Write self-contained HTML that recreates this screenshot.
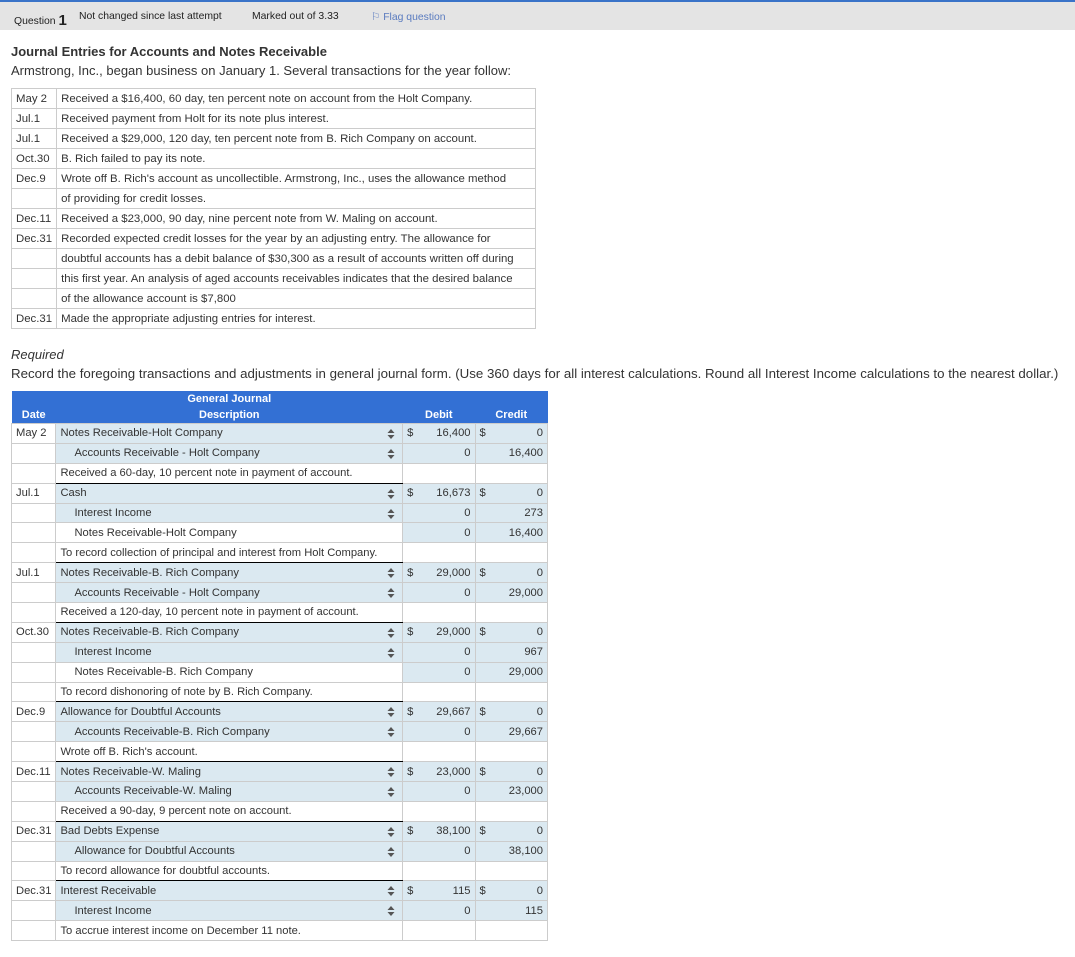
<!DOCTYPE html>
<html><head><meta charset="utf-8"><style>
body{margin:0;width:1075px;height:957px;background:#fff;font-family:"Liberation Sans",sans-serif;color:#333;position:relative;overflow:hidden}
.top{position:absolute;left:0;top:0;width:1075px;height:30px;background:#e4e4e4;border-top:2px solid #3a73c8;box-sizing:border-box;font-size:10.4px;color:#222}
.top span{position:absolute;top:9px}
h1{position:absolute;left:11px;top:44px;margin:0;font-size:13px;font-weight:bold;color:#333}
.p1{position:absolute;left:11px;top:63px;font-size:13px}
table{border-collapse:collapse;position:absolute}
.info{left:11px;top:88px;width:525px;font-size:11.4px}
.info td{border:1px solid #ccc;height:19px;padding:0 4px;white-space:nowrap}
.info td:first-child{width:35px;padding-left:4px}
.req{position:absolute;left:11px;top:347px;font-style:italic;font-size:13px}
.p2{position:absolute;left:11px;top:366px;font-size:13.3px;white-space:nowrap}
.gj{left:11px;top:391px;width:537px;font-size:11.2px}
.gj th{background:#3370d4;color:#fff;font-weight:bold;height:16px;padding:0;font-size:11px}
.gj td{height:19.9px;padding:0 4px;border:1px solid #ccc;box-sizing:border-box;white-space:nowrap;position:relative}
.gj tr.a td{background:#dbe9f1}
.gj tr.a td.d{background:#fff}
.gj tr.m td{background:#fff}
.gj tr.e td{border-bottom:1.5px solid #000}
.gj tr.e td.d,.gj tr.e td.n{border-bottom:1px solid #ccc}
.ar{position:absolute;right:7px;top:5px}
.n{text-align:right}
.ds{float:left}
.in{padding-left:18px!important}
</style></head><body>
<div class="top"><span style="left:14px">Question <b style="font-size:15px;position:relative;top:1px">1</b></span><span style="left:79px">Not changed since last attempt</span><span style="left:252px">Marked out of 3.33</span><span style="left:371px;color:#5a7bbf">⚐ Flag question</span></div>
<h1>Journal Entries for Accounts and Notes Receivable</h1>
<div class="p1">Armstrong, Inc., began business on January 1. Several transactions for the year follow:</div>
<table class="info">
<tr><td>May 2</td><td>Received a $16,400, 60 day, ten percent note on account from the Holt Company.</td></tr>
<tr><td>Jul.1</td><td>Received payment from Holt for its note plus interest.</td></tr>
<tr><td>Jul.1</td><td>Received a $29,000, 120 day, ten percent note from B. Rich Company on account.</td></tr>
<tr><td>Oct.30</td><td>B. Rich failed to pay its note.</td></tr>
<tr><td>Dec.9</td><td>Wrote off B. Rich's account as uncollectible. Armstrong, Inc., uses the allowance method</td></tr>
<tr><td></td><td>of providing for credit losses.</td></tr>
<tr><td>Dec.11</td><td>Received a $23,000, 90 day, nine percent note from W. Maling on account.</td></tr>
<tr><td>Dec.31</td><td>Recorded expected credit losses for the year by an adjusting entry. The allowance for</td></tr>
<tr><td></td><td>doubtful accounts has a debit balance of $30,300 as a result of accounts written off during</td></tr>
<tr><td></td><td>this first year. An analysis of aged accounts receivables indicates that the desired balance</td></tr>
<tr><td></td><td>of the allowance account is $7,800</td></tr>
<tr><td>Dec.31</td><td>Made the appropriate adjusting entries for interest.</td></tr>
</table>
<div class="req">Required</div>
<div class="p2">Record the foregoing transactions and adjustments in general journal form. (Use 360 days for all interest calculations. Round all Interest Income calculations to the nearest dollar.)</div>
<svg width="0" height="0" style="position:absolute"><defs><symbol id="ud" viewBox="0 0 8 10"><path d="M4 0L7.5 4H0.5Z M4 10L7.5 6H0.5Z" fill="#555"/></symbol></defs></svg>
<table class="gj">
<colgroup><col style="width:44px"><col style="width:347px"><col style="width:73px"><col style="width:73px"></colgroup>
<tr><th></th><th>General Journal</th><th></th><th></th></tr>
<tr><th>Date</th><th>Description</th><th>Debit</th><th>Credit</th></tr>
<tr class="a"><td class="d">May 2</td><td>Notes Receivable-Holt Company<svg class="ar" width="8" height="10"><use href="#ud"/></svg></td><td class="n"><span class="ds">$</span>16,400</td><td class="n"><span class="ds">$</span>0</td></tr>
<tr class="a"><td class="d"></td><td class="in">Accounts Receivable - Holt Company<svg class="ar" width="8" height="10"><use href="#ud"/></svg></td><td class="n">0</td><td class="n">16,400</td></tr>
<tr class="m e"><td class="d"></td><td>Received a 60-day, 10 percent note in payment of account.</td><td class="n"></td><td class="n"></td></tr>
<tr class="a"><td class="d">Jul.1</td><td>Cash<svg class="ar" width="8" height="10"><use href="#ud"/></svg></td><td class="n"><span class="ds">$</span>16,673</td><td class="n"><span class="ds">$</span>0</td></tr>
<tr class="a"><td class="d"></td><td class="in">Interest Income<svg class="ar" width="8" height="10"><use href="#ud"/></svg></td><td class="n">0</td><td class="n">273</td></tr>
<tr class="a"><td class="d"></td><td class="in" style="background:#fff">Notes Receivable-Holt Company</td><td class="n">0</td><td class="n">16,400</td></tr>
<tr class="m e"><td class="d"></td><td>To record collection of principal and interest from Holt Company.</td><td class="n"></td><td class="n"></td></tr>
<tr class="a"><td class="d">Jul.1</td><td>Notes Receivable-B. Rich Company<svg class="ar" width="8" height="10"><use href="#ud"/></svg></td><td class="n"><span class="ds">$</span>29,000</td><td class="n"><span class="ds">$</span>0</td></tr>
<tr class="a"><td class="d"></td><td class="in">Accounts Receivable - Holt Company<svg class="ar" width="8" height="10"><use href="#ud"/></svg></td><td class="n">0</td><td class="n">29,000</td></tr>
<tr class="m e"><td class="d"></td><td>Received a 120-day, 10 percent note in payment of account.</td><td class="n"></td><td class="n"></td></tr>
<tr class="a"><td class="d">Oct.30</td><td>Notes Receivable-B. Rich Company<svg class="ar" width="8" height="10"><use href="#ud"/></svg></td><td class="n"><span class="ds">$</span>29,000</td><td class="n"><span class="ds">$</span>0</td></tr>
<tr class="a"><td class="d"></td><td class="in">Interest Income<svg class="ar" width="8" height="10"><use href="#ud"/></svg></td><td class="n">0</td><td class="n">967</td></tr>
<tr class="a"><td class="d"></td><td class="in" style="background:#fff">Notes Receivable-B. Rich Company</td><td class="n">0</td><td class="n">29,000</td></tr>
<tr class="m e"><td class="d"></td><td>To record dishonoring of note by B. Rich Company.</td><td class="n"></td><td class="n"></td></tr>
<tr class="a"><td class="d">Dec.9</td><td>Allowance for Doubtful Accounts<svg class="ar" width="8" height="10"><use href="#ud"/></svg></td><td class="n"><span class="ds">$</span>29,667</td><td class="n"><span class="ds">$</span>0</td></tr>
<tr class="a"><td class="d"></td><td class="in">Accounts Receivable-B. Rich Company<svg class="ar" width="8" height="10"><use href="#ud"/></svg></td><td class="n">0</td><td class="n">29,667</td></tr>
<tr class="m e"><td class="d"></td><td>Wrote off B. Rich's account.</td><td class="n"></td><td class="n"></td></tr>
<tr class="a"><td class="d">Dec.11</td><td>Notes Receivable-W. Maling<svg class="ar" width="8" height="10"><use href="#ud"/></svg></td><td class="n"><span class="ds">$</span>23,000</td><td class="n"><span class="ds">$</span>0</td></tr>
<tr class="a"><td class="d"></td><td class="in">Accounts Receivable-W. Maling<svg class="ar" width="8" height="10"><use href="#ud"/></svg></td><td class="n">0</td><td class="n">23,000</td></tr>
<tr class="m e"><td class="d"></td><td>Received a 90-day, 9 percent note on account.</td><td class="n"></td><td class="n"></td></tr>
<tr class="a"><td class="d">Dec.31</td><td>Bad Debts Expense<svg class="ar" width="8" height="10"><use href="#ud"/></svg></td><td class="n"><span class="ds">$</span>38,100</td><td class="n"><span class="ds">$</span>0</td></tr>
<tr class="a"><td class="d"></td><td class="in">Allowance for Doubtful Accounts<svg class="ar" width="8" height="10"><use href="#ud"/></svg></td><td class="n">0</td><td class="n">38,100</td></tr>
<tr class="m e"><td class="d"></td><td>To record allowance for doubtful accounts.</td><td class="n"></td><td class="n"></td></tr>
<tr class="a"><td class="d">Dec.31</td><td>Interest Receivable<svg class="ar" width="8" height="10"><use href="#ud"/></svg></td><td class="n"><span class="ds">$</span>115</td><td class="n"><span class="ds">$</span>0</td></tr>
<tr class="a"><td class="d"></td><td class="in">Interest Income<svg class="ar" width="8" height="10"><use href="#ud"/></svg></td><td class="n">0</td><td class="n">115</td></tr>
<tr class="m"><td class="d"></td><td>To accrue interest income on December 11 note.</td><td class="n"></td><td class="n"></td></tr>
</table>
</body></html>
